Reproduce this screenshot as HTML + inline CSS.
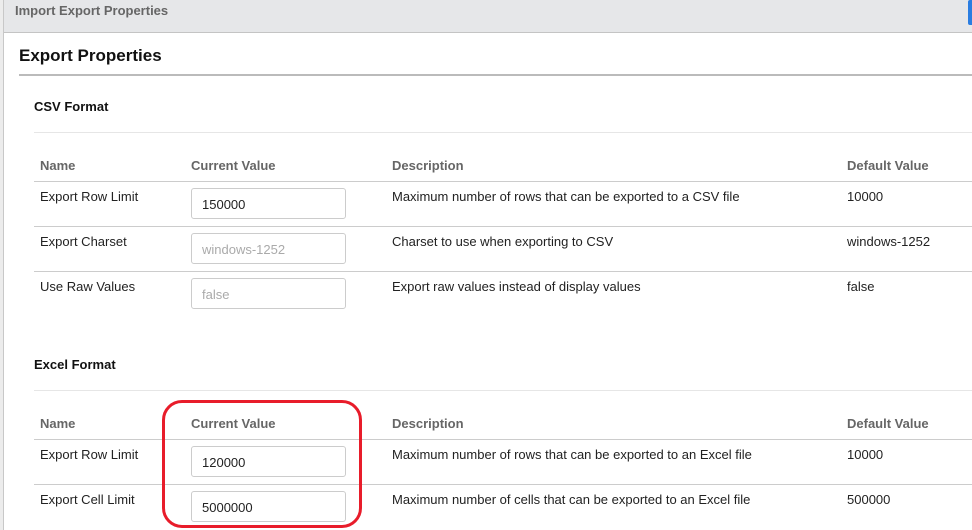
<!DOCTYPE html>
<html><head><style>
*{margin:0;padding:0;box-sizing:border-box}
body{width:972px;height:530px;overflow:hidden;background:#fff;font-family:"Liberation Sans",Arial,sans-serif;position:relative;color:#222}
.abs{position:absolute;white-space:nowrap}
.hdr{left:0;top:0;width:972px;height:33px;background:#e6e7e9;border-bottom:1px solid #c4c4c4}
.lstrip{left:0;top:0;width:4px;height:530px;background:#ececec;border-right:1px solid #c8c8c8}
.th{font-size:13px;font-weight:bold;color:#666}
.td{font-size:13px;color:#222}
.ln{height:1px;background:#ccc;left:34px;width:938px}
.inp{width:155px;height:31px;border:1px solid #ccc;border-radius:3px;font-size:13px;padding:8px 0 0 10px;color:#222}
.dis{color:#aaa}
</style></head><body>
<div class="abs hdr"></div>
<div class="abs lstrip"></div>
<div class="abs" style="left:968px;top:0;width:4px;height:25px;background:#2a7de1;border-radius:2px 0 0 2px"></div>
<div class="abs" style="left:15px;top:3px;font-size:13px;font-weight:bold;color:#666">Import Export Properties</div>
<div class="abs" style="left:19px;top:46px;font-size:17px;font-weight:bold;color:#111">Export Properties</div>
<div class="abs" style="left:19px;top:74px;width:953px;height:2px;background:#bbb"></div>

<div class="abs" style="left:34px;top:99px;font-size:13px;font-weight:bold;color:#111">CSV Format</div>
<div class="abs" style="left:34px;top:132px;width:938px;height:1px;background:#e6e6e6"></div>
<div class="abs th" style="left:40px;top:158px">Name</div>
<div class="abs th" style="left:191px;top:158px">Current Value</div>
<div class="abs th" style="left:392px;top:158px">Description</div>
<div class="abs th" style="left:847px;top:158px">Default Value</div>
<div class="abs ln" style="top:181px"></div>
<div class="abs td" style="left:40px;top:189px">Export Row Limit</div>
<div class="abs inp" style="left:191px;top:188px">150000</div>
<div class="abs td" style="left:392px;top:189px">Maximum number of rows that can be exported to a CSV file</div>
<div class="abs td" style="left:847px;top:189px">10000</div>
<div class="abs ln" style="top:226px"></div>
<div class="abs td" style="left:40px;top:234px">Export Charset</div>
<div class="abs inp dis" style="left:191px;top:233px">windows-1252</div>
<div class="abs td" style="left:392px;top:234px">Charset to use when exporting to CSV</div>
<div class="abs td" style="left:847px;top:234px">windows-1252</div>
<div class="abs ln" style="top:271px"></div>
<div class="abs td" style="left:40px;top:279px">Use Raw Values</div>
<div class="abs inp dis" style="left:191px;top:278px">false</div>
<div class="abs td" style="left:392px;top:279px">Export raw values instead of display values</div>
<div class="abs td" style="left:847px;top:279px">false</div>

<div class="abs" style="left:34px;top:357px;font-size:13px;font-weight:bold;color:#111">Excel Format</div>
<div class="abs" style="left:34px;top:390px;width:938px;height:1px;background:#e6e6e6"></div>
<div class="abs th" style="left:40px;top:416px">Name</div>
<div class="abs th" style="left:191px;top:416px">Current Value</div>
<div class="abs th" style="left:392px;top:416px">Description</div>
<div class="abs th" style="left:847px;top:416px">Default Value</div>
<div class="abs ln" style="top:439px"></div>
<div class="abs td" style="left:40px;top:447px">Export Row Limit</div>
<div class="abs inp" style="left:191px;top:446px">120000</div>
<div class="abs td" style="left:392px;top:447px">Maximum number of rows that can be exported to an Excel file</div>
<div class="abs td" style="left:847px;top:447px">10000</div>
<div class="abs ln" style="top:484px"></div>
<div class="abs td" style="left:40px;top:492px">Export Cell Limit</div>
<div class="abs inp" style="left:191px;top:491px">5000000</div>
<div class="abs td" style="left:392px;top:492px">Maximum number of cells that can be exported to an Excel file</div>
<div class="abs td" style="left:847px;top:492px">500000</div>

<div class="abs" style="left:162px;top:400px;width:200px;height:128px;border:3px solid #e81c2a;border-radius:20px"></div>
</body></html>
